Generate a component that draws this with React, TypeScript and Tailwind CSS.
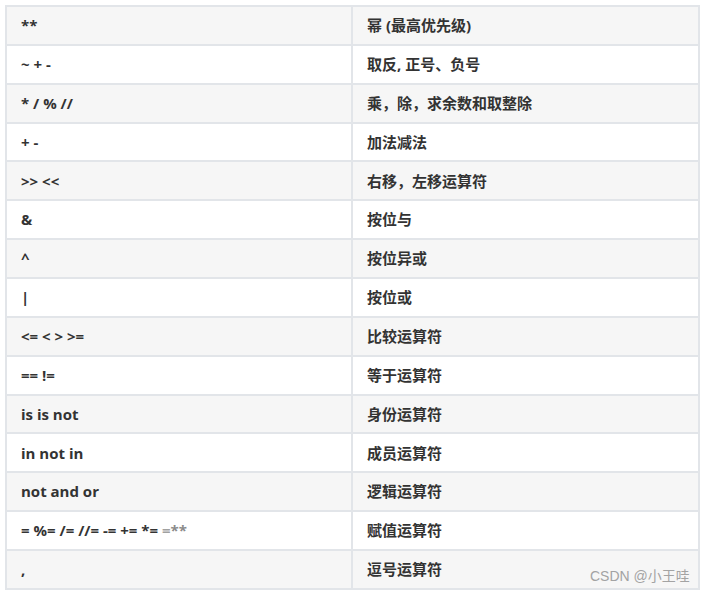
import React from "react";

const rows: [React.ReactNode, string][] = [
  ["**", "幂 (最高优先级)"],
  ["~ + -", "取反, 正号、负号"],
  ["* / % //", "乘，除，求余数和取整除"],
  ["+ -", "加法减法"],
  [">> <<", "右移，左移运算符"],
  ["&", "按位与"],
  ["^", "按位异或"],
  ["|", "按位或"],
  ["<= < > >=", "比较运算符"],
  ["== !=", "等于运算符"],
  ["is is not", "身份运算符"],
  ["in not in", "成员运算符"],
  ["not and or", "逻辑运算符"],
  [
    <>
      = %= /= //= -= += *= <span className="text-[#a0a0a0]">=</span>
      <span className="text-[#8a8a8a]">**</span>
    </>,
    "赋值运算符",
  ],
  [",", "逗号运算符"],
];

export default function App() {
  return (
    <div
      className="relative w-[704px] h-[592px] bg-white pl-[5px] pt-[5px]"
      style={{ fontFamily: '"Open Sans", "Noto Sans CJK SC", sans-serif' }}
    >
      <div className="w-[695px] border-t-2 border-l-2 border-[#e2e5e9]">
        {rows.map(([op, desc], i) => (
          <div
            key={i}
            className={`flex h-[38.87px] border-b-2 border-[#e2e5e9] ${
              i % 2 === 0 ? "bg-[#f6f6f6]" : "bg-white"
            }`}
          >
            <div className="w-[346px] flex items-center px-[14px] border-r-2 border-[#e2e5e9] text-[15px] font-bold text-[#333333] whitespace-pre">
              {op}
            </div>
            <div className="flex-1 flex items-center px-[14px] border-r-2 border-[#e2e5e9] text-[15px] font-bold text-[#333333]">
              {desc}
            </div>
          </div>
        ))}
      </div>
      <div
        className="absolute left-[590px] top-[566px] text-[14px] text-[#a3a3a3] leading-[20px]"
        style={{ fontFamily: '"Liberation Sans", "Noto Sans CJK SC", sans-serif' }}
      >
        CSDN @小王哇
      </div>
    </div>
  );
}
